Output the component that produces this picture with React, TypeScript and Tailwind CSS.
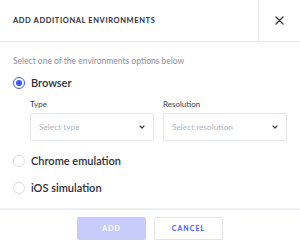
import { useState } from 'react';

const options = [
  { value: 'browser', label: 'Browser' },
  { value: 'chrome', label: 'Chrome emulation' },
  { value: 'ios', label: 'iOS simulation' },
];

function Radio({ checked }: { checked: boolean }) {
  return checked ? (
    <span className="w-[12px] h-[12px] rounded-full border-[1.5px] border-[#3f5af6] flex items-center justify-center shrink-0">
      <span className="w-[6px] h-[6px] rounded-full bg-[#3f5af6]" />
    </span>
  ) : (
    <span className="w-[12px] h-[12px] rounded-full border border-[#dcdde3] shrink-0" />
  );
}

function Chevron() {
  return (
    <svg width="6" height="4" viewBox="0 0 6 4" fill="none" stroke="#3a3d4a" strokeWidth="1.2" strokeLinecap="round" strokeLinejoin="round">
      <path d="M1 1l2 2 2-2" />
    </svg>
  );
}

function SelectBox({ label, placeholder }: { label: string; placeholder: string }) {
  return (
    <div className="flex flex-col w-[124px]">
      <span className="text-[8px] text-[#3b3e4a] leading-[10px] h-[10px] mb-[4px]">{label}</span>
      <div className="h-[28px] border border-[#e6e7ec] rounded-[2px] flex items-center justify-between pl-[8px] pr-[8px]">
        <span className="text-[8.3px] text-[#b3b6c0]">{placeholder}</span>
        <Chevron />
      </div>
    </div>
  );
}

export default function App() {
  const [selected, setSelected] = useState('browser');

  return (
    <div className="w-[300px] h-[249px] bg-white flex flex-col font-['Lato',sans-serif] text-[#2b2e3a]">
      <div className="h-[42px] flex border-b border-[#e8e9ee] shrink-0">
        <div className="flex-1 flex items-center pl-[13px]">
          <span className="text-[7.5px] font-bold tracking-[0.08em] text-[#2b2e3a]">ADD ADDITIONAL ENVIRONMENTS</span>
        </div>
        <button className="w-[42px] border-l border-[#e8e9ee] flex items-center justify-center">
          <svg width="9" height="9" viewBox="0 0 9 9" stroke="#3a3d4a" strokeWidth="1.4" strokeLinecap="round">
            <path d="M1 1l7 7M8 1L1 8" />
          </svg>
        </button>
      </div>

      <div className="flex-1 pl-[13px] pt-[14px]">
        <p className="text-[8.5px] text-[#8d909b] leading-[10px] h-[10px]">Select one of the environments options below</p>

        {options.map(o => (
          <div key={o.value}>
            <button type="button" onClick={() => setSelected(o.value)} className={`flex items-center gap-[6px] h-[14px] ${o.value === 'browser' ? 'mt-[10px]' : 'mt-[13px]'}`}>
              <Radio checked={selected === o.value} />
              <span className="text-[11px] font-semibold text-[#2b2e3a]">{o.label}</span>
            </button>
            {o.value === 'browser' && (
              <div className="flex gap-[9px] pl-[17px] mt-[9px]">
                <SelectBox label="Type" placeholder="Select type" />
                <SelectBox label="Resolution" placeholder="Select resolution" />
              </div>
            )}
          </div>
        ))}
      </div>

      <div className="h-[41px] border-t-2 border-[#eeeff2] flex items-start justify-center gap-[8px] pt-[7px] shrink-0">
        <button className="w-[69px] h-[23px] bg-[#c7cbfa] rounded-[2px] text-[7px] font-bold tracking-[0.15em] text-white">ADD</button>
        <button className="w-[69px] h-[23px] border border-[#e3e4ea] rounded-[2px] text-[7px] font-bold tracking-[0.15em] text-[#3f5af6]">CANCEL</button>
      </div>
    </div>
  );
}
